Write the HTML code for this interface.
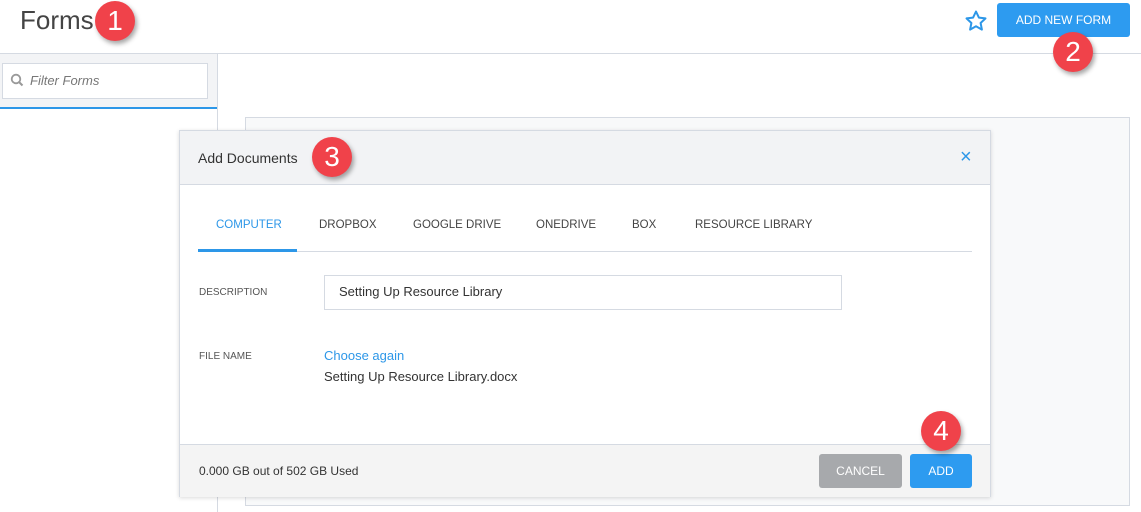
<!DOCTYPE html>
<html><head><style>
*{margin:0;padding:0;box-sizing:border-box}
body{width:1141px;height:512px;position:relative;overflow:hidden;background:#fff;font-family:"Liberation Sans",sans-serif;color:#333}
.a{position:absolute}
.badge{position:absolute;width:40px;height:40px;border-radius:50%;background:#f0424a;color:#fff;font-size:28px;text-align:center;line-height:40px;box-shadow:2px 3px 5px rgba(0,0,0,.35)}
.tab{position:absolute;top:219px;font-size:11.5px;color:#444}
</style></head><body>
<div class="a" style="left:20px;top:5px;font-size:26px;color:#444">Forms</div>
<div class="a" style="left:0;top:53px;width:1141px;height:1px;background:#d5dae2"></div>
<svg class="a" style="left:964px;top:9px" width="24" height="24" viewBox="0 0 24 24"><path d="M12 2.5l2.9 6.1 6.6.8-4.9 4.6 1.3 6.6L12 17.3l-5.9 3.3 1.3-6.6-4.9-4.6 6.6-.8z" fill="none" stroke="#2d97e8" stroke-width="2" stroke-linejoin="round"/></svg>
<div class="a" style="left:997px;top:3px;width:133px;height:34px;background:#2d9bf0;border-radius:3px;color:#fff;font-size:12px;text-align:center;line-height:34px">ADD NEW FORM</div>
<div class="a" style="left:0;top:54px;width:217px;height:54px;background:#f3f4f6"></div>
<div class="a" style="left:217px;top:54px;width:1px;height:458px;background:#d5dae2"></div>
<div class="a" style="left:2px;top:63px;width:206px;height:36px;background:#fff;border:1px solid #d5dae2"></div>
<svg class="a" style="left:10px;top:73px" width="14" height="14" viewBox="0 0 14 14"><circle cx="6" cy="6" r="4.3" fill="none" stroke="#999" stroke-width="1.8"/><path d="M9 9l3.5 3.5" stroke="#999" stroke-width="2"/></svg>
<div class="a" style="left:30px;top:73px;font-size:13px;font-style:italic;color:#777">Filter Forms</div>
<div class="a" style="left:0;top:107px;width:217px;height:2px;background:#2d97e8"></div>
<div class="a" style="left:245px;top:117px;width:885px;height:389px;background:#f8f9fa;border:1px solid #d5dae2"></div>
<div class="a" style="left:179px;top:130px;width:812px;height:367px;background:#fff;border:1px solid #d5dae2;box-shadow:0 1px 4px rgba(0,0,0,.15)">
 <div class="a" style="left:0;top:0;width:810px;height:54px;background:#f2f3f5;border-bottom:1px solid #d5dae2"></div>
 <div class="a" style="left:18px;top:19px;font-size:14px;color:#333">Add Documents</div>
 <div class="a" style="left:780px;top:15px;font-size:20px;color:#2d97e8">×</div>
 <div class="a" style="left:18px;top:120px;width:774px;height:1px;background:#d5dae2"></div>
 <div class="a" style="left:18px;top:118px;width:99px;height:3px;background:#2d97e8"></div>
 <div class="a" style="left:0;top:313px;width:810px;height:53px;background:#f4f4f4;border-top:1px solid #d5dae2"></div>
 <div class="a" style="left:19px;top:333px;font-size:12px">0.000 GB out of 502 GB Used</div>
 <div class="a" style="left:639px;top:323px;width:83px;height:34px;background:#a7a9ac;border-radius:3px;color:#fff;font-size:12px;text-align:center;line-height:34px">CANCEL</div>
 <div class="a" style="left:730px;top:323px;width:62px;height:34px;background:#2d9bf0;border-radius:3px;color:#fff;font-size:12px;text-align:center;line-height:34px">ADD</div>
</div>
<div class="tab" style="left:216px;color:#2d97e8">COMPUTER</div>
<div class="tab" style="left:319px">DROPBOX</div>
<div class="tab" style="left:413px">GOOGLE DRIVE</div>
<div class="tab" style="left:536px">ONEDRIVE</div>
<div class="tab" style="left:632px">BOX</div>
<div class="tab" style="left:695px">RESOURCE LIBRARY</div>
<div class="a" style="left:199px;top:287px;font-size:10px;color:#555">DESCRIPTION</div>
<div class="a" style="left:324px;top:275px;width:518px;height:35px;border:1px solid #d5dae2"></div>
<div class="a" style="left:339px;top:284px;font-size:13px">Setting Up Resource Library</div>
<div class="a" style="left:199px;top:351px;font-size:10px;color:#555">FILE NAME</div>
<div class="a" style="left:324px;top:348px;font-size:13px;color:#2d97e8">Choose again</div>
<div class="a" style="left:324px;top:369px;font-size:13px">Setting Up Resource Library.docx</div>
<div class="badge" style="left:95px;top:1px">1</div>
<div class="badge" style="left:1053px;top:32px">2</div>
<div class="badge" style="left:312px;top:137px">3</div>
<div class="badge" style="left:921px;top:411px">4</div>
</body></html>
